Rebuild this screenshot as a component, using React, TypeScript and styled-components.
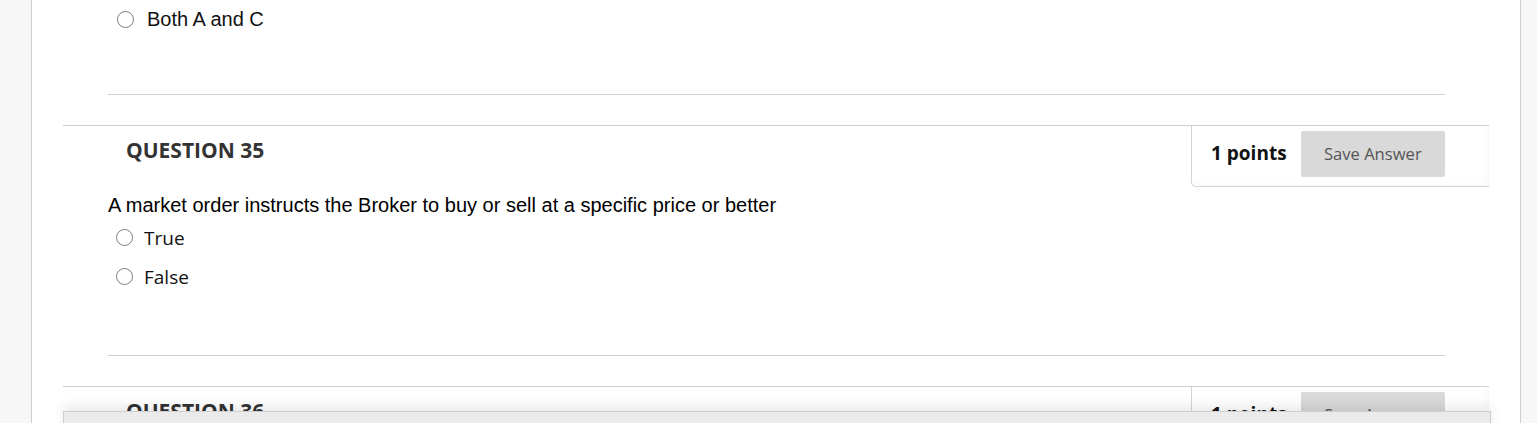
import styled, { createGlobalStyle } from 'styled-components';

const GlobalStyle = createGlobalStyle`
  html, body {
    margin: 0;
    padding: 0;
    background: #f7f7f7;
    overflow: hidden;
  }
`;

const questions = [
  {
    number: 35,
    points: 1,
    text: 'A market order instructs the Broker to buy or sell at a specific price or better',
    options: ['True', 'False'],
  },
  {
    number: 36,
    points: 1,
    text: '',
    options: [],
  },
];

function Option({ label, arial }: { label: string; arial?: boolean }) {
  return (
    <OptionRow $indent={arial ? 54 : 8}>
      <Radio />
      <OptionLabel $arial={arial}>{label}</OptionLabel>
    </OptionRow>
  );
}

function Question({ q }: { q: (typeof questions)[number] }) {
  return (
    <QuestionBlock>
      <QuestionHeader>
        <Title>QUESTION {q.number}</Title>
        <PointsBox>
          <Points>{q.points} points</Points>
          <SaveButton>Save Answer</SaveButton>
        </PointsBox>
      </QuestionHeader>
      <QuestionBody>
        <QuestionText>{q.text}</QuestionText>
        <Options>
          {q.options.map((o) => (
            <Option key={o} label={o} />
          ))}
        </Options>
      </QuestionBody>
      <Divider />
    </QuestionBlock>
  );
}

export default function App() {
  return (
    <>
      <GlobalStyle />
      <Page>
        <Gutter />
        <Main>
          <PrevTail>
            <Option label="Both A and C" arial />
            <Divider />
          </PrevTail>
          {questions.map((q) => (
            <Question key={q.number} q={q} />
          ))}
        </Main>
        <Gutter $right />
      </Page>
      <Footer />
    </>
  );
}

const Page = styled.div`
  display: flex;
  height: 423px;
  overflow: hidden;
`;

const Gutter = styled.div<{ $right?: boolean }>`
  flex: ${({ $right }) => ($right ? '1' : '0 0 31px')};
  background: #f7f7f7;
  border-right: ${({ $right }) => ($right ? 'none' : '1px solid #cfcfcf')};
  border-left: ${({ $right }) => ($right ? '1px solid #cfcfcf' : 'none')};
`;

const Main = styled.main`
  width: 1488px;
  flex-shrink: 0;
  background: #fff;
  padding: 0 31px;
  box-sizing: border-box;
`;

const PrevTail = styled.div`
  padding-bottom: 30px;

  & > label {
    margin-bottom: 55px;
  }
`;

const QuestionBlock = styled.section`
  border-top: 1px solid #cfcfcf;
  padding-bottom: 30px;
`;

const QuestionHeader = styled.div`
  display: flex;
  justify-content: space-between;
  align-items: flex-start;
`;

const Title = styled.h2`
  margin: 11px 0 0 63px;
  font-family: 'Open Sans', sans-serif;
  font-weight: 700;
  font-size: 21px;
  line-height: 26px;
  color: #333;
`;

const PointsBox = styled.div`
  display: flex;
  align-items: center;
  width: 298px;
  box-sizing: border-box;
  padding: 5px 44px 9px 19px;
  border-left: 1px solid #d5d5d5;
  border-bottom: 1px solid #d5d5d5;
  border-bottom-left-radius: 5px;
  box-shadow: inset -6px -4px 8px -6px rgba(0, 0, 0, 0.06);
`;

const Points = styled.span`
  font-family: 'Open Sans', sans-serif;
  font-weight: 700;
  font-size: 19px;
  line-height: 24px;
  color: #111;
  margin: -3px 14px 0 0;
  white-space: nowrap;
`;

const SaveButton = styled.button`
  flex: 1;
  height: 46px;
  border: none;
  border-radius: 2px;
  background: #d9d9d9;
  font-family: 'Open Sans', sans-serif;
  font-size: 16.6px;
  color: #555;
  padding: 0 0 2px;
`;

const QuestionBody = styled.div`
  padding: 6px 0 0 45px;
`;

const QuestionText = styled.p`
  margin: 0 0 1px;
  font-family: 'Liberation Sans', Arial, sans-serif;
  font-size: 20px;
  line-height: 24px;
  color: #000;
`;

const Options = styled.div`
  display: flex;
  flex-direction: column;
  margin-bottom: 59px;
`;

const OptionRow = styled.label<{ $indent: number }>`
  display: flex;
  align-items: center;
  gap: 11px;
  height: 39px;
  padding-left: ${({ $indent }) => $indent}px;
`;

const Radio = styled.span`
  width: 17px;
  height: 17px;
  box-sizing: border-box;
  border: 1.8px solid #7a7a7a;
  border-radius: 50%;
  background: #fff;
  flex-shrink: 0;
`;

const OptionLabel = styled.span<{ $arial?: boolean }>`
  font-family: ${({ $arial }) =>
    $arial ? "'Liberation Sans', Arial, sans-serif" : "'Open Sans', sans-serif"};
  font-size: ${({ $arial }) => ($arial ? '20px' : '19px')};
  color: #111;
  margin-left: ${({ $arial }) => ($arial ? '2px' : '0')};
`;

const Divider = styled.hr`
  margin: 0 44px 0 45px;
  border: none;
  border-top: 1px solid #d0d0d0;
  height: 0;
`;

const Footer = styled.div`
  position: fixed;
  left: 63px;
  width: 1428px;
  top: 411px;
  height: 40px;
  box-sizing: border-box;
  background: #ebebeb;
  border: 1px solid #cfcfcf;
  box-shadow: 0 -6px 10px rgba(0, 0, 0, 0.08);
`;
